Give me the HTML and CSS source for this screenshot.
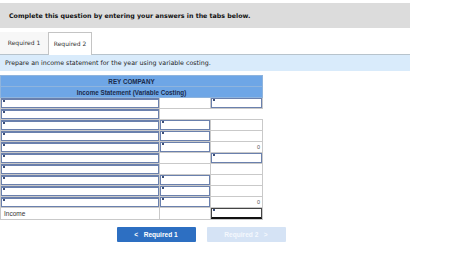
FILE: index.html
```html
<!DOCTYPE html>
<html lang="en">
<head>
  <meta charset="UTF-8">
  <title>Income Statement - Variable Costing</title>
  <link rel="stylesheet" href="styles.css">
</head>
<body>
  <div class="wrap">
    <div class="prompt">Complete this question by entering your answers in the tabs below.</div>

    <div class="tabs">
      <div class="tab">Required 1</div>
      <div class="tab active">Required 2</div>
    </div>

    <div class="instructions">Prepare an income statement for the year using variable costing.</div>

    <table class="sheet">
      <colgroup>
        <col class="c-label">
        <col class="c-mid">
        <col class="c-right">
      </colgroup>
      <thead>
        <tr><th colspan="3">REY COMPANY</th></tr>
        <tr><th colspan="3">Income Statement (Variable Costing)</th></tr>
      </thead>
      <tbody>
        <tr><td><div class="inp label-inp"></div></td><td></td><td><div class="inp"></div></td></tr>
        <tr><td><div class="inp label-inp"></div></td><td colspan="2" class="open"></td></tr>
        <tr><td><div class="inp label-inp"></div></td><td><div class="inp"></div></td><td></td></tr>
        <tr><td><div class="inp label-inp"></div></td><td><div class="inp"></div></td><td></td></tr>
        <tr><td><div class="inp label-inp"></div></td><td><div class="inp"></div></td><td class="num">0</td></tr>
        <tr><td><div class="inp label-inp"></div></td><td></td><td><div class="inp"></div></td></tr>
        <tr><td><div class="inp label-inp"></div></td><td></td><td></td></tr>
        <tr><td><div class="inp label-inp"></div></td><td><div class="inp"></div></td><td></td></tr>
        <tr><td><div class="inp label-inp"></div></td><td><div class="inp"></div></td><td></td></tr>
        <tr><td><div class="inp label-inp"></div></td><td><div class="inp"></div></td><td class="num">0</td></tr>
        <tr class="total"><td class="text">Income</td><td></td><td><div class="inp total-inp"></div></td></tr>
      </tbody>
    </table>

    <div class="nav">
      <button class="btn">&lt;&nbsp;&nbsp;&nbsp;Required 1</button>
      <button class="btn disabled">Required 2&nbsp;&nbsp;&nbsp;&gt;</button>
    </div>
  </div>
</body>
</html>
```

FILE: styles.css
```css
:root {
  --gray-box: #dcdcdc;
  --tab-line: #b7c3cc;
  --info-bg: #d9ebfb;
  --head-blue: #6ea6e6;
  --navy: #1a2a4a;
  --input-blue: #6a80ad;
  --cell-line: #c9c9c9;
  --btn-blue: #2d6fc2;
  --btn-off: #d5e3f5;
}

* {
  margin: 0;
  padding: 0;
  box-sizing: border-box;
}

body {
  background: #fff;
  font-family: "DejaVu Sans", Verdana, sans-serif;
  color: #222;
}

.wrap {
  width: 410px;
  padding-top: 3px;
}

.prompt {
  height: 25px;
  line-height: 25px;
  padding-left: 9px;
  background: var(--gray-box);
  font-size: 6.3px;
  font-weight: bold;
  color: #111;
}

.tabs {
  display: flex;
  margin-top: 4px;
  height: 23px;
  border-bottom: 1px solid var(--tab-line);
}

.tab {
  width: 48px;
  line-height: 22px;
  text-align: center;
  font-size: 6px;
  color: #333;
  background: #f7f7f7;
}

.tab.active {
  width: 44px;
  line-height: 21px;
  background: #fff;
  border: 1px solid #c4c4c4;
  border-bottom: none;
  margin-bottom: -1px;
}

.instructions {
  height: 16px;
  line-height: 16px;
  padding-left: 5px;
  background: var(--info-bg);
  font-size: 6.3px;
  color: #222;
}

.sheet {
  margin-top: 4px;
  width: 262px;
  border-collapse: collapse;
  table-layout: fixed;
  border: 1px solid #b5b5b5;
  font-family: "Liberation Sans", Arial, sans-serif;
}

.c-label { width: 159px; }
.c-mid { width: 51px; }
.c-right { width: 52px; }

.sheet th {
  height: 11px;
  padding: 0;
  background: var(--head-blue);
  color: var(--navy);
  font-size: 6.3px;
  font-weight: bold;
  text-align: center;
  border: 1px solid #8fb4dd;
}

.sheet td {
  height: 11px;
  border: 1px solid var(--cell-line);
  padding: 0;
  line-height: 9px;
}

.sheet td.open {
  border-right-color: transparent;
}

.sheet td.num {
  text-align: right;
  padding-right: 2px;
  font-size: 5.5px;
  color: #555;
}

.sheet .total td {
  height: 12px;
}

.sheet td.text {
  font-size: 6.5px;
  color: #333;
  padding-left: 3px;
}

.inp {
  height: 10px;
  border: 1px solid var(--input-blue);
  background: #fff;
  position: relative;
}

.label-inp {
  border-top-width: 2px;
}

.inp::before {
  content: '';
  position: absolute;
  left: 1px;
  top: 0;
  width: 2px;
  height: 2px;
  background: #3b4f7a;
}

.total-inp {
  height: 11px;
  border-color: #444;
  border-bottom: 2px solid #111;
}

.nav {
  display: flex;
  justify-content: center;
  gap: 11px;
  margin-top: 7px;
  padding-right: 8px;
}

.btn {
  width: 79px;
  height: 15px;
  border: none;
  border-radius: 1px;
  background: var(--btn-blue);
  color: #fff;
  font-family: "Liberation Sans", Arial, sans-serif;
  font-size: 6.6px;
  font-weight: bold;
}

.btn.disabled {
  background: var(--btn-off);
  color: #f4f8fd;
}
```
